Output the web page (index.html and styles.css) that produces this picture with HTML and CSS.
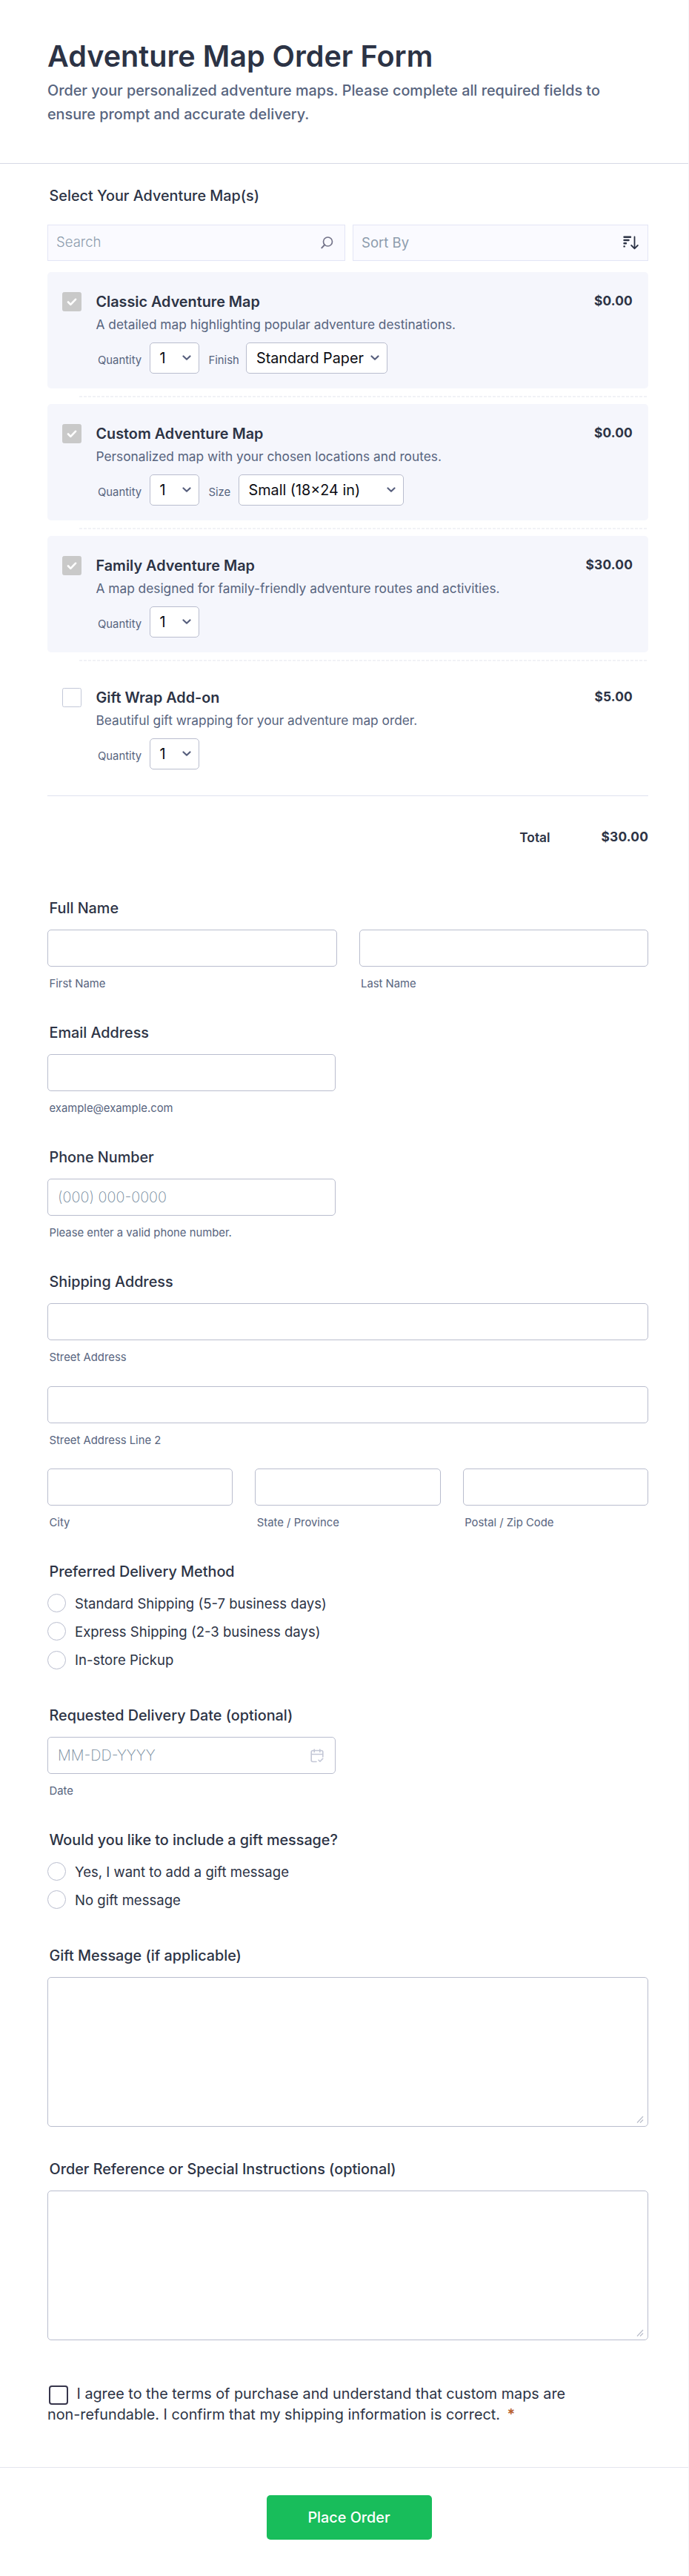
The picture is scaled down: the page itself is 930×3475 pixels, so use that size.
FILE: index.html
```html
<!DOCTYPE html>
<html lang="en">
<head>
<meta charset="utf-8">
<title>Adventure Map Order Form</title>
<link rel="stylesheet" href="styles.css">
</head>
<body>
<svg width="0" height="0" class="defs">
  <symbol id="chevron" viewBox="0 0 12 8"><path d="M1.500 1.500 6 5.800l4.500-4.300" fill="none" stroke="#58607e" stroke-width="2.200" stroke-linecap="round" stroke-linejoin="round"/></symbol>
  <symbol id="check" viewBox="0 0 14 11"><path d="M2 5.500 5.300 8.800 12 1.800" fill="none" stroke="#fff" stroke-width="2.600" stroke-linecap="round" stroke-linejoin="round"/></symbol>
  <symbol id="grip" viewBox="0 0 10 10"><path d="M1 9.500 9 1M5 9.500 9 5.500" fill="none" stroke="#b9bdca" stroke-width="1.200"/></symbol>
</svg>
<form class="form">
  <header class="head">
    <h1 class="title">Adventure Map Order Form</h1>
    <p class="subtitle">Order your personalized adventure maps. Please complete all required fields to<br>ensure prompt and accurate delivery.</p>
  </header>

  <section class="products">
    <div class="label">Select Your Adventure Map(s)</div>
    <div class="filters">
      <div class="filter search"><span>Search</span>
        <svg width="17" height="17" viewBox="0 0 17 17"><circle cx="9.500" cy="7" r="6" fill="none" stroke="#74748a" stroke-width="1.700"/><path d="M5.200 11.300 1.300 15.400" stroke="#74748a" stroke-width="2" stroke-linecap="round"/></svg>
      </div>
      <div class="filter sort"><span>Sort By</span>
        <svg width="21" height="19" viewBox="0 0 21 19" fill="none" stroke="#2c3345" stroke-linecap="round" stroke-linejoin="round"><path d="M1.500 1.800h8.500M1.500 6h6M1.500 10.200h2.500M1.500 14.400h.3" stroke-width="2.400"/><path d="M15.500 1.500v15.500M11.200 13l4.300 4.300 4.300-4.300" stroke-width="1.800"/></svg>
      </div>
    </div>
    <article class="card">
      <span class="box checked"><svg width="14" height="11"><use href="#check"/></svg></span>
      <div class="info">
        <div class="row"><h2 class="name">Classic Adventure Map</h2><span class="price">$0.00</span></div>
        <p class="desc">A detailed map highlighting popular adventure destinations.</p>
        <div class="options">
          <span class="opt">Quantity</span><span class="select qty">1<svg width="12" height="8"><use href="#chevron"/></svg></span>
          <span class="opt">Finish</span><span class="select finish">Standard Paper<svg width="12" height="8"><use href="#chevron"/></svg></span>
        </div>
      </div>
    </article>
    <div class="sep"></div>
    <article class="card">
      <span class="box checked"><svg width="14" height="11"><use href="#check"/></svg></span>
      <div class="info">
        <div class="row"><h2 class="name">Custom Adventure Map</h2><span class="price">$0.00</span></div>
        <p class="desc">Personalized map with your chosen locations and routes.</p>
        <div class="options">
          <span class="opt">Quantity</span><span class="select qty">1<svg width="12" height="8"><use href="#chevron"/></svg></span>
          <span class="opt">Size</span><span class="select size">Small (18×24 in)<svg width="12" height="8"><use href="#chevron"/></svg></span>
        </div>
      </div>
    </article>
    <div class="sep"></div>
    <article class="card">
      <span class="box checked"><svg width="14" height="11"><use href="#check"/></svg></span>
      <div class="info">
        <div class="row"><h2 class="name">Family Adventure Map</h2><span class="price">$30.00</span></div>
        <p class="desc">A map designed for family-friendly adventure routes and activities.</p>
        <div class="options">
          <span class="opt">Quantity</span><span class="select qty">1<svg width="12" height="8"><use href="#chevron"/></svg></span>
        </div>
      </div>
    </article>
    <div class="sep"></div>
    <article class="card plain">
      <span class="box"></span>
      <div class="info">
        <div class="row"><h2 class="name">Gift Wrap Add-on</h2><span class="price">$5.00</span></div>
        <p class="desc">Beautiful gift wrapping for your adventure map order.</p>
        <div class="options">
          <span class="opt">Quantity</span><span class="select qty">1<svg width="12" height="8"><use href="#chevron"/></svg></span>
        </div>
      </div>
    </article>
    <div class="total"><span class="total-label">Total</span><span class="price">$30.00</span></div>
  </section>

  <section class="field">
    <div class="label">Full Name</div>
    <div class="cols">
      <div class="cell"><div class="input"></div><div class="hint">First Name</div></div>
      <div class="cell"><div class="input"></div><div class="hint">Last Name</div></div>
    </div>
  </section>
  <section class="field">
    <div class="label">Email Address</div>
    <div class="input half"></div><div class="hint">example@example.com</div>
  </section>
  <section class="field">
    <div class="label">Phone Number</div>
    <div class="input half"><span class="ph">(000) 000-0000</span></div><div class="hint">Please enter a valid phone number.</div>
  </section>
  <section class="field address">
    <div class="label">Shipping Address</div>
    <div class="lines">
      <div class="cell"><div class="input"></div><div class="hint">Street Address</div></div>
      <div class="cell"><div class="input"></div><div class="hint">Street Address Line 2</div></div>
      <div class="cols">
        <div class="cell"><div class="input"></div><div class="hint">City</div></div>
        <div class="cell"><div class="input"></div><div class="hint">State / Province</div></div>
        <div class="cell"><div class="input"></div><div class="hint">Postal / Zip Code</div></div>
      </div>
    </div>
  </section>
  <section class="field three">
    <div class="label">Preferred Delivery Method</div>
    <div class="radios">
      <div class="radio"><span class="dot"></span>Standard Shipping (5-7 business days)</div>
      <div class="radio"><span class="dot"></span>Express Shipping (2-3 business days)</div>
      <div class="radio"><span class="dot"></span>In-store Pickup</div>
    </div>
  </section>
  <section class="field">
    <div class="label">Requested Delivery Date (optional)</div>
    <div class="input half"><span class="ph">MM-DD-YYYY</span>
      <svg width="18" height="19" viewBox="0 0 18 19" fill="none" stroke="#c3c7d6" stroke-width="1.600" stroke-linecap="round" stroke-linejoin="round"><path d="M8 17.500H3.200a2 2 0 0 1-2-2V4.500a2 2 0 0 1 2-2h11.600a2 2 0 0 1 2 2V11M1.500 7.500h15M5.200 1v3.500M12.800 1v3.500M11 15.300l1.900 1.900 3.800-3.800"/></svg>
    </div><div class="hint">Date</div>
  </section>
  <section class="field two">
    <div class="label">Would you like to include a gift message?</div>
    <div class="radios">
      <div class="radio"><span class="dot"></span>Yes, I want to add a gift message</div>
      <div class="radio"><span class="dot"></span>No gift message</div>
    </div>
  </section>
  <section class="field area">
    <div class="label">Gift Message (if applicable)</div>
    <div class="textarea"><svg width="10" height="10"><use href="#grip"/></svg></div>
  </section>
  <section class="field area">
    <div class="label">Order Reference or Special Instructions (optional)</div>
    <div class="textarea"><svg width="10" height="10"><use href="#grip"/></svg></div>
  </section>
  <section class="terms">
    <span class="agree"></span>I agree to the terms of purchase and understand that custom maps are<br>non-refundable. I confirm that my shipping information is correct. <span class="star">*</span>
  </section>
  <footer class="foot"><div class="submit">Place Order</div></footer>
</form>
</body>
</html>
```
FILE: styles.css
```css
* { box-sizing: border-box; }
body {
  margin: 0;
  background: #fff;
  color: #2c3345;
  font-family: Inter, sans-serif;
  font-size: 19.79px;
}
h1, h2, p { margin: 0; }
svg { display: block; flex: none; }
.defs { position: absolute; }
.form { width: 930px; height: 3475px; border-right: 1px solid #f5f5fa; }

.head { height: 221px; padding: 50px 64px 0; border-bottom: 1px solid #d7d9e5; }
.title { font-size: 39.57px; line-height: 53px; font-weight: 600; }
.subtitle { margin-top: 3px; line-height: 32px; font-weight: 500; color: #57647e; }

.label { padding-left: 2.500px; line-height: 24px; font-weight: 500; }

.products { padding: 31px 54px 0 64px; }
.filters { display: flex; gap: 10px; margin-top: 27px; }
.filter {
  flex: 1; height: 49px; padding: 0 12px 0 11px;
  display: flex; align-items: center; justify-content: space-between;
  background: #fafaff; border: 1px solid #e3e5f5;
  font-size: 18.55px; color: #8d9cad;
}
.search { font-weight: 300; padding-right: 15px; }
.search span { padding-bottom: 3px; }
.sort span { padding-bottom: 1px; }

.card {
  display: flex; height: 157px; margin-top: 15px; padding: 27px 21px 0 19.500px;
  background: #f5f6fc; border-radius: 5px;
}
.sep + .card { margin-top: 9px; }
.sep {
  height: 2px; margin: 10px 0 0 43px;
  background: repeating-linear-gradient(90deg, #f1f2f6 0 4px, transparent 4px 6px);
}
.plain { background: none; }
.box {
  flex: none; width: 26px; height: 26px; margin-right: 20px;
  display: flex; align-items: center; justify-content: center;
  border: 1px solid #c3c8d8; border-radius: 2.500px; background: #fff;
}
.checked { background: #c9c9c9; border-color: #c9c9c9; }
.info { flex: 1; }
.row { display: flex; justify-content: space-between; }
.name { font-size: 19.79px; line-height: 26px; font-weight: 600; }
.price { font-size: 17.31px; line-height: 24px; font-weight: 700; letter-spacing: .2px; }
.desc { margin-top: 6px; font-size: 17.31px; line-height: 24px; color: #57647e; }
.options { display: flex; align-items: center; margin-top: 12px; }
.opt { width: 72px; padding: 5px 0 0 2.500px; font-size: 14.84px; color: #57647e; }
.select {
  display: flex; align-items: center; justify-content: space-between;
  height: 42px; padding: 0 10px 0 13px;
  background: #fff; border: 1px solid #b9bdce; border-radius: 5px; color: #0b0b12;
}
.qty { width: 67px; margin-right: 10.500px; }
.select + .opt { width: 53px; }
.finish { width: 191px; }
.select + .opt:has(+ .size) { width: 42.500px; }
.size { width: 223px; }

.total {
  display: flex; justify-content: flex-end; height: 102px; margin-top: 15px; padding-top: 43px;
  border-top: 1px solid #dfe2ee;
}
.total-label { margin-right: 69px; font-size: 17.31px; line-height: 26px; font-weight: 600; }

.field { padding: 0 54px 0 64px; height: 168px; }
.products + .field { margin-top: 38px; }
.input {
  display: flex; align-items: center; justify-content: space-between;
  height: 50px; padding: 0 15px 0 13px;
  border: 1px solid #b9bdce; border-radius: 5px; background: #fff;
}
.label + .input, .label + .cols, .label + .lines { margin-top: 17px; }
.half { width: 388.500px; }
.hint { margin-top: 14px; padding-left: 2.500px; font-size: 14.84px; line-height: 18px; color: #57647e; }
.cols { display: flex; gap: 30px; }
.cell { flex: 1; }
.lines { display: grid; row-gap: 29.500px; }
.address { height: 391px; }
.ph { font-weight: 200; color: #71879a; }
.radios { display: grid; margin-top: 18px; row-gap: 13px; }
.radio { display: flex; align-items: center; height: 25.300px; font-size: 18.55px; }
.dot { width: 25px; height: 25px; margin-right: 12px; border: 1px solid #b9bdce; border-radius: 50%; }
.three { height: 194px; }
.two { height: 156px; }
.area { height: 288px; }
.textarea {
  display: flex; align-items: flex-end; justify-content: flex-end;
  height: 202px; margin-top: 17px; padding: 4px 5px;
  border: 1px solid #b9bdce; border-radius: 5px;
}
.terms { height: 126px; padding: 13px 64px 0; font-size: 19.79px; line-height: 28px; }
.agree {
  display: inline-block; width: 26px; height: 26px; margin: -2px 11.500px -2px 2px;
  border: 2px solid #37364c; border-radius: 4px; vertical-align: -6px;
}
.star { margin-left: 4px; color: #b8602f; font-weight: 600; }
.foot { height: 147px; padding-top: 37px; border-top: 1px solid #e3e5ef; }
.submit {
  width: 223px; height: 60px; margin: 0 auto 0 359.500px;
  display: flex; align-items: center; justify-content: center;
  border-radius: 5px; background: #18bd5b; color: #fff; font-weight: 500;
}
```
